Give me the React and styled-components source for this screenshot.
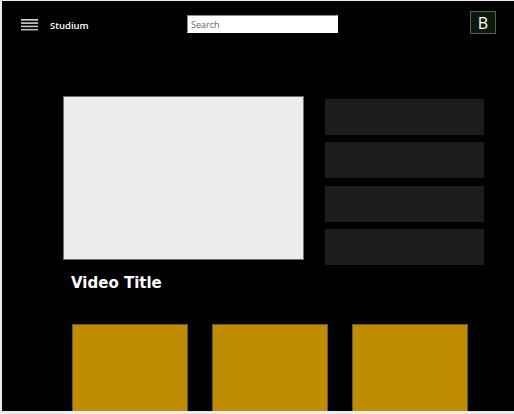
import styled, { createGlobalStyle } from "styled-components";

const GlobalStyle = createGlobalStyle`
  html, body {
    margin: 0;
    background: #ececec;
    font-family: "Open Sans", "Liberation Sans", sans-serif;
    overflow: hidden;
  }
`;

const sideItems = [0, 1, 2, 3];
const thumbs = [0, 1, 2];

export default function App() {
  return (
    <>
      <GlobalStyle />
      <Frame>
        <Header>
          <Brand>
            <MenuIcon />
            <BrandName>Studium</BrandName>
          </Brand>
          <SearchInput placeholder="Search" />
          <Avatar>B</Avatar>
        </Header>

        <Main>
          <Player>
            <VideoBox />
            <VideoTitle>Video Title</VideoTitle>
          </Player>
          <SideList>
            {sideItems.map((i) => (
              <SideItem key={i} />
            ))}
          </SideList>
        </Main>

        <ThumbRow>
          {thumbs.map((i) => (
            <Thumb key={i} />
          ))}
        </ThumbRow>
      </Frame>
    </>
  );
}

function MenuIcon() {
  return (
    <svg width="17" height="12" viewBox="0 0 17 12">
      <rect x="0" y="0" width="17" height="1.6" fill="#d8d8d8" />
      <rect x="0" y="3.3" width="17" height="1.6" fill="#d0d0d0" />
      <rect x="0" y="6.6" width="17" height="1.6" fill="#c4c4c4" />
      <rect x="0" y="9.9" width="17" height="1.6" fill="#b8b8b8" />
    </svg>
  );
}

const Frame = styled.div`
  margin: 1px 0 0 2px;
  width: 512px;
  height: 410px;
  background: #000;
  overflow: hidden;
`;

const Header = styled.header`
  display: flex;
  align-items: center;
  height: 46px;
  padding: 0 18px 0 19px;
`;

const Brand = styled.div`
  display: flex;
  align-items: center;
  gap: 12px;
  width: 166px;
  margin-top: 2px;
`;

const BrandName = styled.span`
  color: #fff;
  font-size: 9.5px;
  font-weight: 600;
  margin-top: 1px;
`;

const SearchInput = styled.input`
  box-sizing: border-box;
  width: 151px;
  height: 18px;
  padding: 0 3px;
  border: 1px solid;
  border-color: #8a8a8a #fff #fff #8a8a8a;
  background: #fff;
  outline: none;
  font-family: "Open Sans", sans-serif;
  font-size: 9px;

  &::placeholder {
    color: #6a6a6a;
  }
`;

const Avatar = styled.div`
  box-sizing: border-box;
  margin-left: auto;
  margin-top: -3px;
  width: 26px;
  height: 23px;
  display: flex;
  align-items: center;
  justify-content: center;
  background: #0b190b;
  border: 1px solid #52624f;
  color: #fff;
  font-size: 16px;
`;

const Main = styled.section`
  display: flex;
  align-items: flex-start;
  gap: 21px;
  padding: 49px 0 0 61px;
`;

const Player = styled.div`
  display: flex;
  flex-direction: column;
`;

const VideoBox = styled.div`
  box-sizing: border-box;
  width: 241px;
  height: 164px;
  background: #ececec;
  border: 1px solid #707070;
`;

const VideoTitle = styled.h2`
  margin: 14px 0 0 8px;
  color: #fff;
  font-family: "DejaVu Sans", sans-serif;
  font-size: 15px;
  font-weight: 700;
`;

const SideList = styled.div`
  display: flex;
  flex-direction: column;
  gap: 7.3px;
  margin-top: 3px;
`;

const SideItem = styled.div`
  width: 159px;
  height: 36px;
  background: #1c1c1c;
`;

const ThumbRow = styled.div`
  display: flex;
  gap: 24px;
  padding: 32px 0 0 70px;
`;

const Thumb = styled.div`
  box-sizing: border-box;
  width: 116px;
  height: 100px;
  background: #bf8c00;
  border: 1px solid #6b5a2a;
`;
